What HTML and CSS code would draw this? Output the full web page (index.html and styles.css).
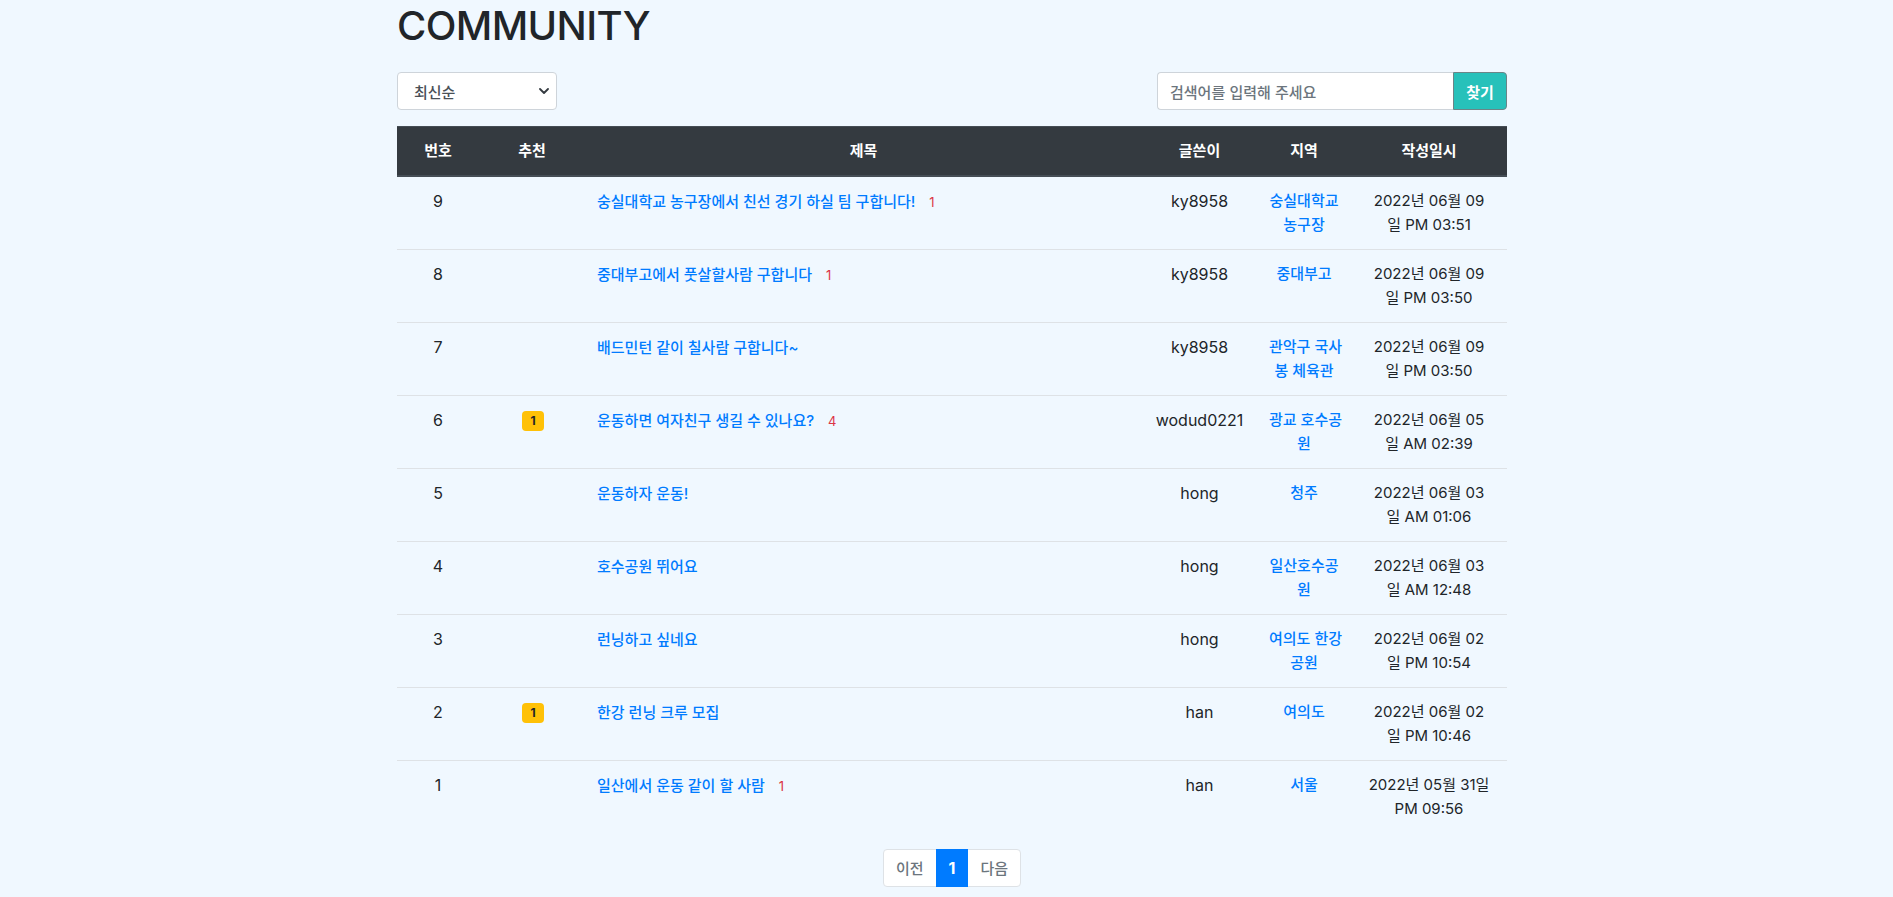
FILE: index.html
```html
<!DOCTYPE html>
<html lang="ko">
<head>
<meta charset="utf-8">
<title>COMMUNITY</title>
<link rel="stylesheet" href="styles.css">
</head>
<body>
<div class="container">
  <h1 class="page-title">COMMUNITY</h1>
  <div class="toolbar">
    <div class="sort">
      <select class="sort-select">
        <option>최신순</option>
        <option>추천순</option>
      </select>
      <svg class="chevron" width="10" height="6" viewBox="0 0 10 6"><path d="M1 1l4 4 4-4" fill="none" stroke="#343a40" stroke-width="1.8" stroke-linecap="round" stroke-linejoin="round"/></svg>
    </div>
    <form class="search">
      <input class="search-input" type="text" placeholder="검색어를 입력해 주세요">
      <button class="search-btn" type="button">찾기</button>
    </form>
  </div>

  <table class="board">
    <colgroup>
      <col class="c-no"><col class="c-rec"><col class="c-title"><col class="c-writer"><col class="c-area"><col class="c-date">
    </colgroup>
    <thead>
      <tr><th>번호</th><th>추천</th><th>제목</th><th>글쓴이</th><th>지역</th><th>작성일시</th></tr>
    </thead>
    <tbody>
      <tr>
        <td>9</td><td></td>
        <td class="t"><a href="#">숭실대학교 농구장에서 친선 경기 하실 팀 구합니다!</a><span class="cnt">1</span></td>
        <td>ky8958</td>
        <td><a href="#"><span class="ln">숭실대학교</span><span class="ln">농구장</span></a></td>
        <td><span class="ln">2022년 06월 09</span><span class="ln">일 PM 03:51</span></td>
      </tr>
      <tr>
        <td>8</td><td></td>
        <td class="t"><a href="#">중대부고에서 풋살할사람 구합니다</a><span class="cnt">1</span></td>
        <td>ky8958</td>
        <td><a href="#"><span class="ln">중대부고</span></a></td>
        <td><span class="ln">2022년 06월 09</span><span class="ln">일 PM 03:50</span></td>
      </tr>
      <tr>
        <td>7</td><td></td>
        <td class="t"><a href="#">배드민턴 같이 칠사람 구합니다~</a></td>
        <td>ky8958</td>
        <td><a href="#"><span class="ln">관악구 국사</span><span class="ln">봉 체육관</span></a></td>
        <td><span class="ln">2022년 06월 09</span><span class="ln">일 PM 03:50</span></td>
      </tr>
      <tr>
        <td>6</td><td><span class="badge">1</span></td>
        <td class="t"><a href="#">운동하면 여자친구 생길 수 있나요?</a><span class="cnt">4</span></td>
        <td class="w">wodud0221</td>
        <td><a href="#"><span class="ln">광교 호수공</span><span class="ln">원</span></a></td>
        <td><span class="ln">2022년 06월 05</span><span class="ln">일 AM 02:39</span></td>
      </tr>
      <tr>
        <td>5</td><td></td>
        <td class="t"><a href="#">운동하자 운동!</a></td>
        <td>hong</td>
        <td><a href="#"><span class="ln">청주</span></a></td>
        <td><span class="ln">2022년 06월 03</span><span class="ln">일 AM 01:06</span></td>
      </tr>
      <tr>
        <td>4</td><td></td>
        <td class="t"><a href="#">호수공원 뛰어요</a></td>
        <td>hong</td>
        <td><a href="#"><span class="ln">일산호수공</span><span class="ln">원</span></a></td>
        <td><span class="ln">2022년 06월 03</span><span class="ln">일 AM 12:48</span></td>
      </tr>
      <tr>
        <td>3</td><td></td>
        <td class="t"><a href="#">런닝하고 싶네요</a></td>
        <td>hong</td>
        <td><a href="#"><span class="ln">여의도 한강</span><span class="ln">공원</span></a></td>
        <td><span class="ln">2022년 06월 02</span><span class="ln">일 PM 10:54</span></td>
      </tr>
      <tr>
        <td>2</td><td><span class="badge">1</span></td>
        <td class="t"><a href="#">한강 런닝 크루 모집</a></td>
        <td>han</td>
        <td><a href="#"><span class="ln">여의도</span></a></td>
        <td><span class="ln">2022년 06월 02</span><span class="ln">일 PM 10:46</span></td>
      </tr>
      <tr>
        <td>1</td><td></td>
        <td class="t"><a href="#">일산에서 운동 같이 할 사람</a><span class="cnt">1</span></td>
        <td>han</td>
        <td><a href="#"><span class="ln">서울</span></a></td>
        <td><span class="ln">2022년 05월 31일</span><span class="ln">PM 09:56</span></td>
      </tr>
    </tbody>
  </table>

  <nav class="pager">
    <a class="page-link first" href="#">이전</a>
    <a class="page-link active" href="#">1</a>
    <a class="page-link last" href="#">다음</a>
  </nav>
</div>
</body>
</html>
```
FILE: styles.css
```css
* { box-sizing: border-box; }

html, body {
  margin: 0;
  background: #f0f8ff;
}

body {
  font-family: "Inter", "Noto Sans CJK KR", sans-serif;
  font-size: 16px;
  line-height: 1.5;
  color: #212529;
}

.container {
  box-sizing: content-box;
  width: 1110px;
  padding-left: 11px;
  margin: 0 auto;
}

.page-title {
  margin: 0;
  padding-top: 2px;
  font-size: 40px;
  line-height: 48px;
  font-weight: 500;
  letter-spacing: -0.6px;
  color: #212529;
}

.toolbar {
  display: flex;
  justify-content: space-between;
  align-items: center;
  margin-top: 22px;
}

.sort {
  position: relative;
  width: 160px;
  height: 38px;
}

.sort-select {
  appearance: none;
  -webkit-appearance: none;
  width: 100%;
  height: 38px;
  padding: 0 28px 0 16px;
  border: 1px solid #ced4da;
  border-radius: 4px;
  background: #fff;
  font-family: "Noto Sans CJK KR", sans-serif;
  font-size: 15px;
  color: #495057;
  font-weight: 500;
}

.chevron {
  position: absolute;
  right: 8px;
  top: 16px;
}

.search {
  display: flex;
  width: 350px;
  height: 38px;
  margin: 0;
}

.search-input {
  flex: 1;
  min-width: 0;
  height: 38px;
  padding: 0 12px;
  border: 1px solid #ced4da;
  border-right: none;
  border-radius: 4px 0 0 4px;
  background: #fff;
  font-family: "Noto Sans CJK KR", sans-serif;
  font-size: 15px;
}

.search-input::placeholder {
  color: #6c757d;
  font-weight: 500;
}

.search-btn {
  width: 54px;
  height: 38px;
  border: 1px solid #6b8587;
  border-radius: 0 4px 4px 0;
  background: #27c1ba;
  color: #fff;
  font-family: "Noto Sans CJK KR", sans-serif;
  font-size: 15px;
  font-weight: 700;
  padding: 0;
}

.board {
  width: 100%;
  table-layout: fixed;
  border-collapse: collapse;
  margin-top: 16px;
}

.c-no { width: 82px; }
.c-rec { width: 106px; }
.c-title { width: 557px; }
.c-writer { width: 115px; }
.c-area { width: 94px; }
.c-date { width: 156px; }

.board th {
  background: #343a40;
  color: #fff;
  font-weight: 700;
  padding: 12px;
  line-height: 24px;
  text-align: center;
  border-top: 1px solid #454d55;
  border-bottom: 2px solid #454d55;
  font-size: 15px;
}

.board td {
  padding: 12px;
  line-height: 24px;
  border-top: 1px solid #dee2e6;
  text-align: center;
  vertical-align: top;
  white-space: nowrap;
  font-weight: 400;
}

.board td.t {
  text-align: left;
}

.board tbody tr:first-child td {
  border-top: 2px solid #454d55;
}

.board a {
  color: #007bff;
  text-decoration: none;
  font-weight: 500;
}

.t a {
  font-size: 15px;
}

.ln {
  display: block;
}

.board td:nth-child(5) a { font-size: 15px; }
.board td:nth-child(6) { font-size: 15px; }

.cnt {
  margin-left: 14px;
  font-size: 13px;
  font-weight: 400;
  color: #dc3545;
}

.badge {
  display: inline-block;
  width: 22px;
  height: 20px;
  line-height: 20px;
  border-radius: 4px;
  background: #ffc107;
  color: #212529;
  font-size: 12px;
  font-weight: 700;
  text-align: center;
  vertical-align: 1px;
  margin-left: 2px;
}

.pager {
  display: flex;
  justify-content: center;
  margin-top: 16px;
  padding-bottom: 10px;
}

.page-link {
  display: block;
  height: 38px;
  padding: 8px 12px;
  line-height: 20px;
  border: 1px solid #dee2e6;
  background: #fff;
  color: #6c757d;
  text-decoration: none;
  font-family: "Noto Sans CJK KR", sans-serif;
  font-size: 15px;
  font-weight: 500;
  margin-left: -1px;
}

.page-link.first {
  margin-left: 0;
  border-radius: 4px 0 0 4px;
}

.page-link.last {
  border-radius: 0 4px 4px 0;
}

.page-link.active {
  background: #007bff;
  border-color: #007bff;
  color: #fff;
  font-weight: 700;
  font-family: "Inter", sans-serif;
  font-size: 16px;
  position: relative;
  z-index: 1;
}
```
